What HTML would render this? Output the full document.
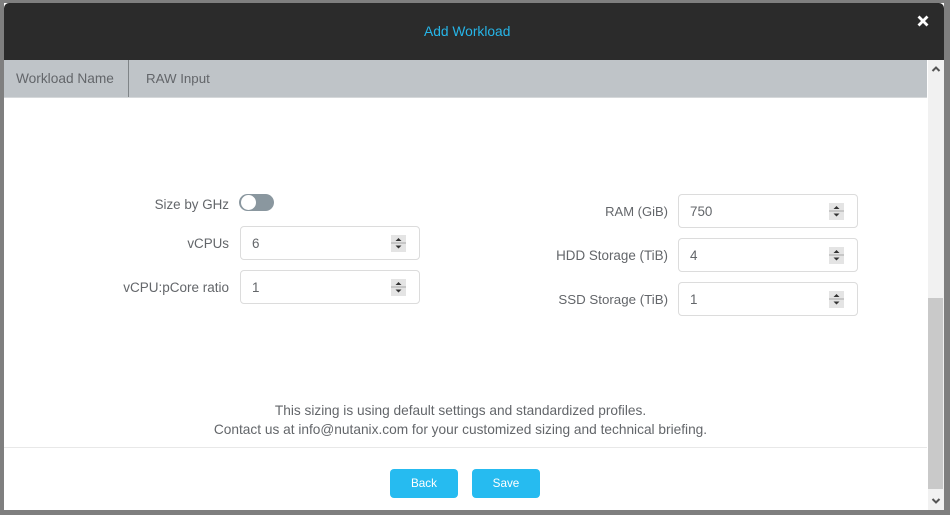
<!DOCTYPE html>
<html><head><meta charset="utf-8"><style>
html,body{margin:0;padding:0;width:950px;height:515px;overflow:hidden;background:#7f7f7f;font-family:"Liberation Sans",sans-serif;color:#63666a;font-size:13px}
.a{position:absolute}
.lbl{position:absolute;text-align:right;line-height:16px;white-space:nowrap;font-size:13.4px}
.inp{position:absolute;width:178px;height:32px;border:1px solid #dcdcdc;border-radius:4px;background:#fff;line-height:33px;text-indent:11px;font-size:13.4px}
.sp{position:absolute;left:150px;top:8px;width:15px;height:17px;background:#e4e4e4}
.sp svg{display:block}
.btn{position:absolute;top:469px;width:68px;height:29px;background:#26bbf0;border-radius:4px;color:#fff;text-align:center;line-height:29px;font-size:11.7px}
</style></head><body>
<div class="a" style="left:4px;top:3px;width:940px;height:507px;background:#fff"></div>
<div class="a" style="left:4px;top:3px;width:940px;height:57px;background:#2b2b2b;border-radius:5px 5px 0 0"></div>
<div class="a" style="left:424px;top:22px;white-space:nowrap;color:#26b5e8;font-size:13.8px;line-height:19px">Add Workload</div>
<svg class="a" style="left:917px;top:15px" width="12" height="12" viewBox="0 0 12 12"><path d="M2.500 2.500L9.500 9.500M9.500 2.500L2.500 9.500" stroke="#fff" stroke-width="2.800" stroke-linecap="square"/></svg>
<div class="a" style="left:4px;top:60px;width:923px;height:37px;background:#bfc4c8;border-bottom:1px solid #d5d8da"></div>
<div class="a" style="left:128px;top:60px;width:1px;height:37px;background:#7f8487"></div>
<div class="a" style="left:16px;top:71px;line-height:16px;font-size:13.7px">Workload Name</div>
<div class="a" style="left:146px;top:71px;line-height:16px;font-size:13.3px">RAW Input</div>
<div class="a" style="left:928px;top:60px;width:16px;height:450px;background:#f1f1f1"></div>
<div class="a" style="left:928px;top:298px;width:15px;height:191px;background:#c9c9c9"></div>
<svg class="a" style="left:931px;top:65px" width="10" height="8" viewBox="0 0 10 8"><path d="M1.500 6L5 2.500L8.500 6" fill="none" stroke="#555" stroke-width="2"/></svg>
<svg class="a" style="left:931px;top:497px" width="10" height="8" viewBox="0 0 10 8"><path d="M1.500 2L5 5.500L8.500 2" fill="none" stroke="#555" stroke-width="2"/></svg>

<div class="lbl" style="right:721px;top:197px">Size by GHz</div>
<div class="a" style="left:239px;top:194px;width:35px;height:17px;background:#8a979f;border-radius:9px"></div>
<div class="a" style="left:241px;top:195px;width:15px;height:15px;background:#fff;border-radius:50%"></div>
<div class="lbl" style="right:721px;top:236px">vCPUs</div>
<div class="inp" style="left:240px;top:226px">6<div class="sp"><svg width="15" height="17" viewBox="0 0 15 17"><path d="M0 8h15" stroke="#bdbdbd" stroke-width="1.500"/><path d="M4.500 6L7.500 3L10.500 6Z M4.500 10.500L7.500 13.500L10.500 10.500Z" fill="#333"/></svg></div></div>
<div class="lbl" style="right:721px;top:280px;font-size:13.5px">vCPU:pCore ratio</div>
<div class="inp" style="left:240px;top:270px">1<div class="sp"><svg width="15" height="17" viewBox="0 0 15 17"><path d="M0 8h15" stroke="#bdbdbd" stroke-width="1.500"/><path d="M4.500 6L7.500 3L10.500 6Z M4.500 10.500L7.500 13.500L10.500 10.500Z" fill="#333"/></svg></div></div>

<div class="lbl" style="right:282px;top:204px;font-size:13px">RAM (GiB)</div>
<div class="inp" style="left:678px;top:194px">750<div class="sp"><svg width="15" height="17" viewBox="0 0 15 17"><path d="M0 8h15" stroke="#bdbdbd" stroke-width="1.500"/><path d="M4.500 6L7.500 3L10.500 6Z M4.500 10.500L7.500 13.500L10.500 10.500Z" fill="#333"/></svg></div></div>
<div class="lbl" style="right:282px;top:248px">HDD Storage (TiB)</div>
<div class="inp" style="left:678px;top:238px">4<div class="sp"><svg width="15" height="17" viewBox="0 0 15 17"><path d="M0 8h15" stroke="#bdbdbd" stroke-width="1.500"/><path d="M4.500 6L7.500 3L10.500 6Z M4.500 10.500L7.500 13.500L10.500 10.500Z" fill="#333"/></svg></div></div>
<div class="lbl" style="right:282px;top:292px;font-size:13.3px">SSD Storage (TiB)</div>
<div class="inp" style="left:678px;top:282px">1<div class="sp"><svg width="15" height="17" viewBox="0 0 15 17"><path d="M0 8h15" stroke="#bdbdbd" stroke-width="1.500"/><path d="M4.500 6L7.500 3L10.500 6Z M4.500 10.500L7.500 13.500L10.500 10.500Z" fill="#333"/></svg></div></div>

<div class="a" style="left:0;top:401px;width:921px;text-align:center;line-height:19px;font-size:13.7px">This sizing is using default settings and standardized profiles.<br>Contact us at info@nutanix.com for your customized sizing and technical briefing.</div>
<div class="a" style="left:4px;top:447px;width:923px;height:1px;background:#e8e8e8"></div>
<div class="btn" style="left:390px">Back</div>
<div class="btn" style="left:472px">Save</div>
</body></html>
